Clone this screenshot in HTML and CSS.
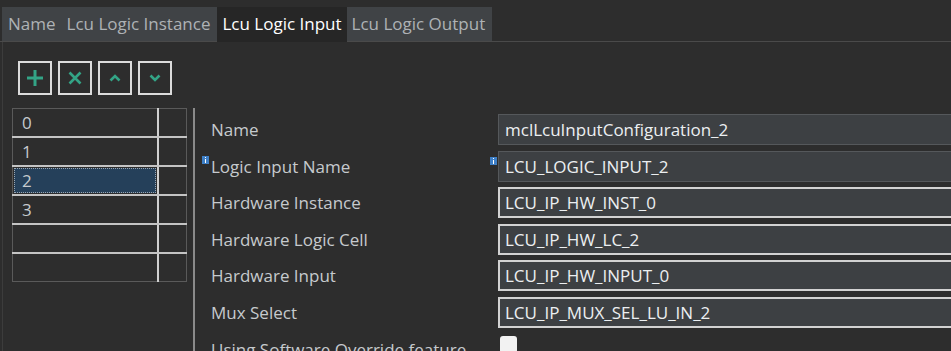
FILE: index.html
```html
<!DOCTYPE html>
<html lang="en">
<head>
    <meta charset="UTF-8">
    <title>Lcu Logic Input</title>
    <link rel="stylesheet" href="styles.css">
</head>
<body>
    <div class="tabs">
        <div class="tab">Name</div>
        <div class="tab">Lcu Logic Instance</div>
        <div class="tab active">Lcu Logic Input</div>
        <div class="tab">Lcu Logic Output</div>
    </div>
    <div class="panel">
        <div class="left">
            <div class="toolbar">
                <button class="tool" title="Add">
                    <svg width="18" height="18" viewBox="0 0 18 18"><path d="M9 1v16M1 9h16" stroke="#33a486" stroke-width="3"/></svg>
                </button>
                <button class="tool" title="Remove">
                    <svg width="14" height="14" viewBox="0 0 14 14"><path d="M1.5 1.5l11 11M12.5 1.5l-11 11" stroke="#33a486" stroke-width="2.6"/></svg>
                </button>
                <button class="tool" title="Move up">
                    <svg width="12" height="8" viewBox="0 0 12 8"><path d="M1.5 6.5L6 2l4.5 4.5" fill="none" stroke="#33a486" stroke-width="2.6"/></svg>
                </button>
                <button class="tool" title="Move down">
                    <svg width="12" height="8" viewBox="0 0 12 8"><path d="M1.5 1.5L6 6l4.5-4.5" fill="none" stroke="#33a486" stroke-width="2.6"/></svg>
                </button>
            </div>
            <table class="list">
                <tr><td>0</td><td></td></tr>
                <tr><td>1</td><td></td></tr>
                <tr class="selected"><td><span class="focus">2</span></td><td></td></tr>
                <tr><td>3</td><td></td></tr>
                <tr><td></td><td></td></tr>
                <tr><td></td><td></td></tr>
            </table>
        </div>
        <div class="splitter"></div>
        <div class="form">
            <div class="label">Name</div>
            <div class="field readonly">mclLcuInputConfiguration_2</div>

            <div class="label"><span class="info"></span>Logic Input Name</div>
            <div class="field readonly"><span class="info"></span>LCU_LOGIC_INPUT_2</div>

            <div class="label">Hardware Instance</div>
            <div class="field">LCU_IP_HW_INST_0</div>

            <div class="label">Hardware Logic Cell</div>
            <div class="field">LCU_IP_HW_LC_2</div>

            <div class="label">Hardware Input</div>
            <div class="field">LCU_IP_HW_INPUT_0</div>

            <div class="label">Mux Select</div>
            <div class="field">LCU_IP_MUX_SEL_LU_IN_2</div>

            <div class="label">Using Software Override feature</div>
            <div class="check-cell"><span class="checkbox"></span></div>
        </div>
    </div>
</body>
</html>
```
FILE: styles.css
```css
html, body { margin: 0; padding: 0; }
body {
    width: 951px;
    height: 351px;
    overflow: hidden;
    background-color: #2d2d2d;
    font-family: "Open Sans", "Noto Sans", sans-serif;
    font-size: 17px;
    color: #c6cacd;
}

/* tab strip */
.tabs { display: flex; margin-top: 7px; height: 34px; border-bottom: 1px solid #4a4a4a; }
.tab { background-color: #404346; color: #aeb2b5; padding: 0 7px 0 5px; line-height: 34px; }
.tab:first-child { margin-left: 2px; padding-left: 6px; padding-right: 6px; }
.tab.active { background-color: #262626; color: #fff; margin-bottom: -1px; padding-right: 5px; }

/* main panel */
.panel { display: flex; margin-left: 2px; border-left: 1px solid #3c3c3c; height: 310px; }
.left { flex: none; width: 190px; }
.toolbar { display: flex; gap: 6px; padding: 19px 0 0 15px; }
.tool {
    flex: none;
    width: 34px; height: 34px; padding: 0;
    border: 2px solid #dcdcdc; background-color: #2d2d2d;
    display: flex; align-items: center; justify-content: center;
}

.list { margin: 13px 0 0 9px; border-collapse: collapse; border: 1px solid #5a5a5a; width: 175px; }
.list td { height: 27px; padding: 0; border-bottom: 2px solid #c4c4c4; color: #c6cacd; }
.list td:first-child { width: 135px; padding-left: 9px; border-right: 1px solid #5a5a5a; }
.list td:last-child { border-left: 2px solid #d0d0d0; }
.list tr:last-child td { border-bottom: none; }
.list tr.selected td:first-child { padding: 0 1px; }
.focus {
    display: block; height: 23px; padding-left: 7px; line-height: 23px;
    background-color: #25405a; border: 1px dotted #9aa6b2;
}

.splitter { flex: none; width: 2px; margin-top: 66px; background-color: #8a8a8a; }

/* property form */
.form {
    flex: none;
    display: grid;
    grid-template-columns: 287px 470px;
    grid-auto-rows: 31px;
    row-gap: 5.6px;
    padding: 72px 0 0 16px;
}
.label { position: relative; display: flex; align-items: center; white-space: nowrap; }
.field {
    position: relative;
    box-sizing: border-box;
    background-color: #3d4043;
    border: 2px solid #d2d2d2;
    color: #eceff1;
    padding-left: 5px;
    line-height: 27px;
    white-space: nowrap;
}
.field.readonly { border: 1px solid #55585b; padding-left: 6px; line-height: 29px; }
.info {
    position: absolute; left: -9px; top: 5px;
    width: 7px; height: 8px; background-color: #3e7fc6;
}
.info::after {
    content: ""; position: absolute; left: 3px; top: 3px; width: 1px; height: 4px; background-color: #fff;
}
.info::before {
    content: ""; position: absolute; left: 3px; top: 1px; width: 1px; height: 1px; background-color: #fff;
}
.check-cell { display: flex; align-items: flex-start; padding-left: 2px; }
.checkbox { width: 17px; height: 17px; border-radius: 3px; background-color: #f2f2f2; margin-top: 2px; }
```
